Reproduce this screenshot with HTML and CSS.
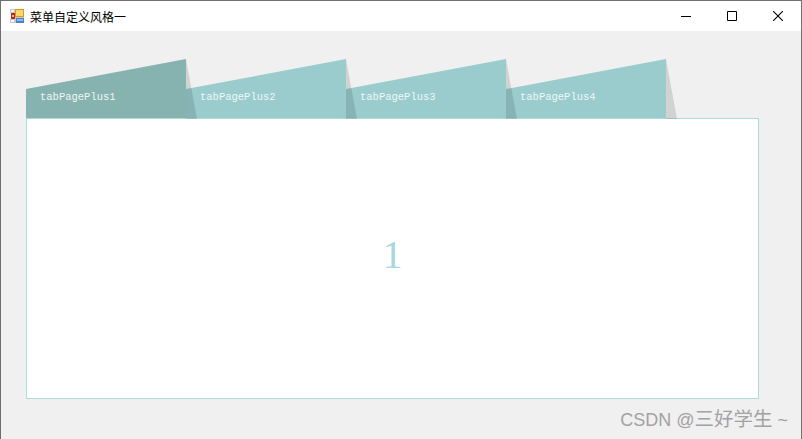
FILE: index.html
```html
<!DOCTYPE html>
<html>
<head>
    <title>菜单自定义风格一</title>
    <link rel="stylesheet" href="styles.css">
</head>
<body>
    <div class="window">
        <!-- Title bar -->
        <div class="titlebar">
            <svg class="app-icon" width="14" height="14" viewBox="0 0 14 14">
                <rect x="0" y="0" width="14" height="14" fill="#c8c8c8"/>
                <rect x="1" y="1" width="3" height="2" fill="#f4f4f4"/>
                <rect x="0" y="4" width="5" height="6" fill="#fff"/>
                <rect x="1" y="4" width="4" height="6" fill="#b02a20"/>
                <rect x="2" y="6" width="2" height="2" fill="#e8b0a0"/>
                <rect x="5" y="0" width="9" height="8" fill="#d89a18"/>
                <rect x="6" y="1" width="7" height="6" fill="#f8d868"/>
                <rect x="6" y="9" width="8" height="5" fill="#4a80d0"/>
                <rect x="7" y="10" width="6" height="2" fill="#90b8e8"/>
                <rect x="1" y="11" width="3" height="2" fill="#f4f4f4"/>
            </svg>
            <span class="title">菜单自定义风格一</span>
            <div class="controls">
                <button class="control">
                    <svg width="10" height="10" viewBox="0 0 10 10"><path d="M0 5.5H10" stroke="#000" fill="none"/></svg>
                </button>
                <button class="control">
                    <svg width="10" height="10" viewBox="0 0 10 10"><path d="M.5 .5H9.500V9.500H.5Z" stroke="#000" fill="none"/></svg>
                </button>
                <button class="control">
                    <svg width="10" height="10" viewBox="0 0 10 10"><path d="M0 0L10 10M10 0L0 10" stroke="#000" stroke-width="1.100" fill="none"/></svg>
                </button>
            </div>
        </div>

        <!-- Tabs -->
        <div class="content">
            <div class="tabs">
                <div class="tab active"><div class="tab-face">tabPagePlus1</div></div>
                <div class="tab"><div class="tab-face">tabPagePlus2</div></div>
                <div class="tab"><div class="tab-face">tabPagePlus3</div></div>
                <div class="tab"><div class="tab-face">tabPagePlus4</div></div>
            </div>
            <div class="panel">1</div>
        </div>
    </div>
    <div class="watermark">CSDN @<span class="watermark-name">三好学生</span> ~</div>
</body>
</html>
```

FILE: styles.css
```css
html, body {
    height: 100%;
}
body {
    margin: 0;
    background-color: #f0f0f0;
    font-family: "Noto Sans CJK SC", "Liberation Sans", sans-serif;
    overflow: hidden;
}
.window {
    height: 100%;
    box-sizing: border-box;
    border: 1px solid #707070;
    border-bottom: none;
}
.titlebar {
    display: flex;
    align-items: center;
    height: 30px;
    padding-left: 9px;
    background: white;
}
.app-icon {
    margin-right: 6px;
}
.title {
    font-size: 12px;
    color: #000;
}
.controls {
    display: flex;
    margin-left: auto;
}
.control {
    display: flex;
    align-items: center;
    justify-content: center;
    width: 46px;
    height: 30px;
    padding: 0;
    background: none;
    border: none;
}
.content {
    padding: 28px 0 0 25px;
}
.tabs {
    display: flex;
    height: 60px;
}
.tab {
    position: relative;
    width: 160px;
    height: 60px;
}
/* drop shadow wedge falling on the next tab */
.tab::after {
    content: "";
    position: absolute;
    z-index: 1;
    left: 160px;
    top: 0;
    width: 11px;
    height: 60px;
    background: rgba(0, 0, 0, 0.12);
    clip-path: polygon(0 0, 100% 100%, 0 100%);
}
.tab-face {
    box-sizing: border-box;
    height: 60px;
    padding: 31px 0 0 14px;
    background-color: #9acccd;
    clip-path: polygon(0 30px, 100% 0, 100% 100%, 0 100%);
    font-family: "Liberation Mono", monospace;
    font-size: 10.500px;
    line-height: 14px;
    color: #eef7f7;
}
.active .tab-face {
    background-color: #86b2b0;
}
.panel {
    display: flex;
    align-items: center;
    justify-content: center;
    box-sizing: border-box;
    width: 733px;
    height: 281px;
    margin-top: -1px;
    padding-bottom: 8px;
    position: relative;
    background: white;
    border: 1px solid #aedcdc;
    font-family: "Liberation Serif", serif;
    font-size: 40px;
    color: #a6d8de;
}
.watermark {
    position: absolute;
    right: 14px;
    bottom: 6px;
    font-family: "Liberation Sans", "Noto Sans CJK SC", sans-serif;
    font-size: 18px;
    line-height: 26px;
    color: #a2a2a2;
}
.watermark-name {
    font-family: "Noto Sans CJK SC", sans-serif;
    font-size: 19.500px;
}
```
